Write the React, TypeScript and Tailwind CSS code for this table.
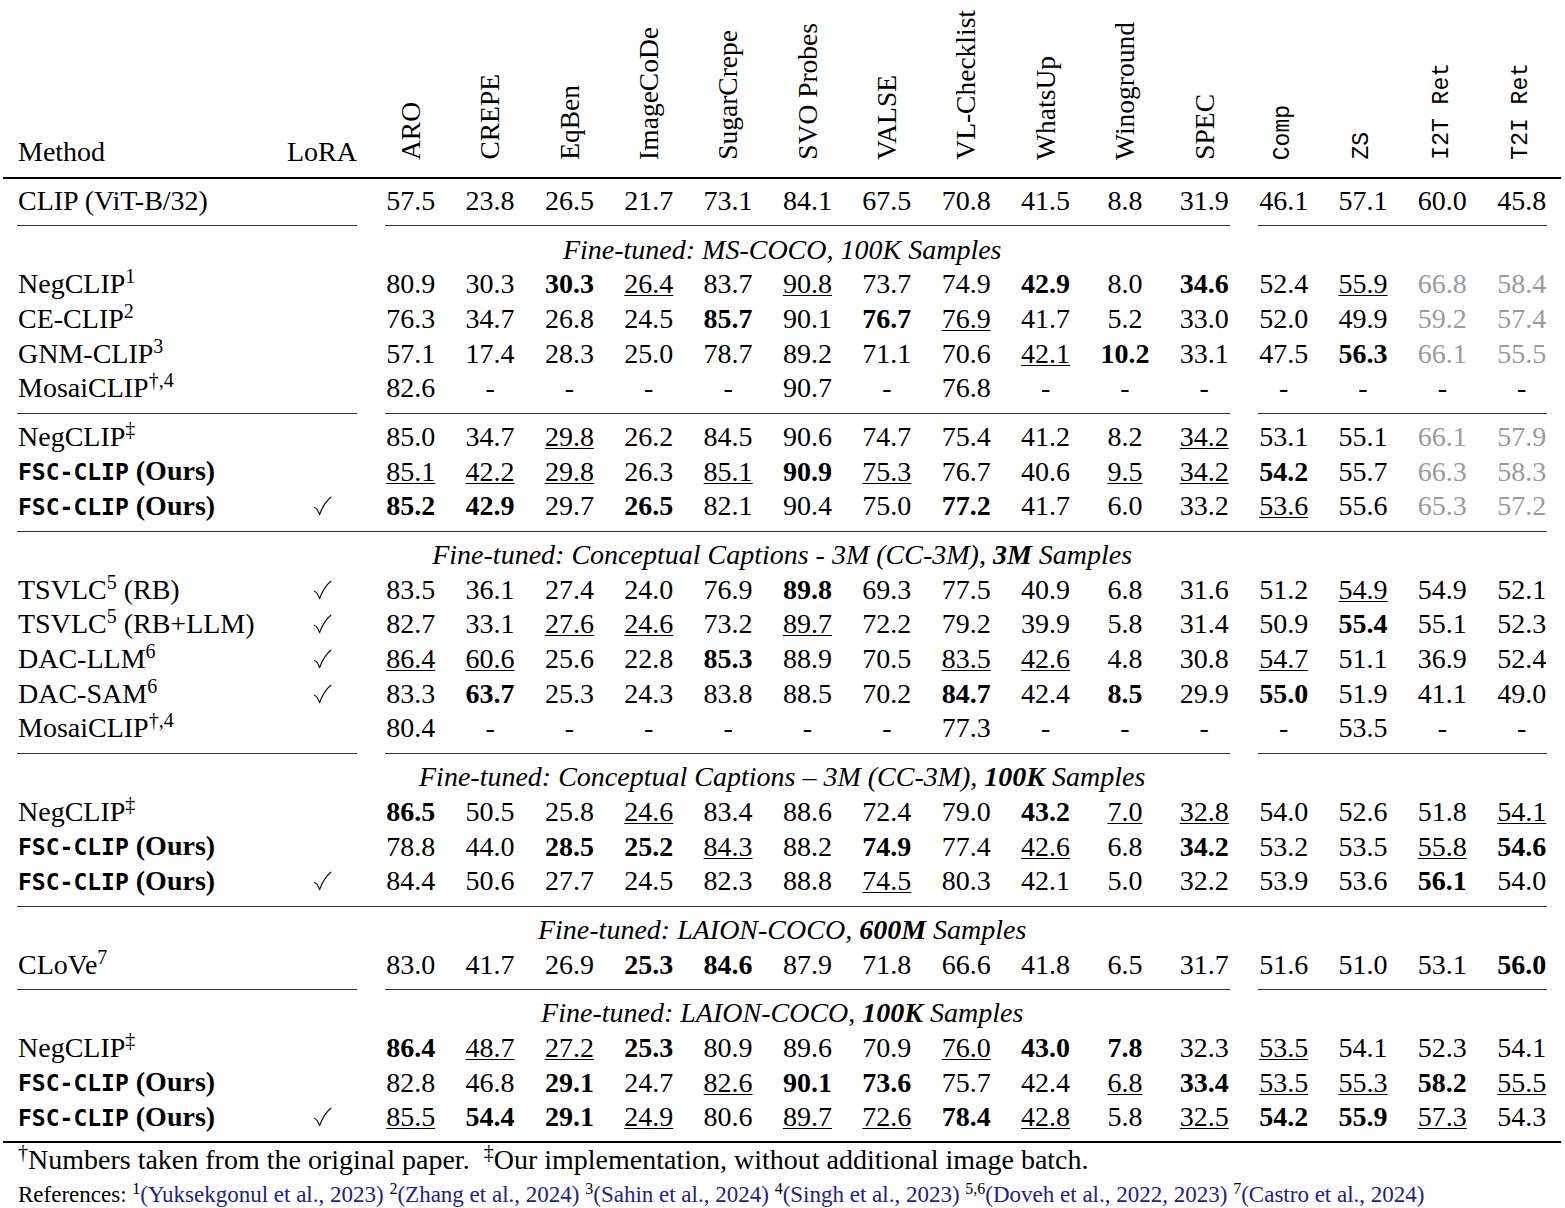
import React from "react";

const GRID = "grid grid-cols-[270px_98px_repeat(15,79.36px)]";

function Num({ v }: { v: string }) {
  let cls = "";
  let t = v;
  if (v.startsWith("b:")) {
    cls = "font-bold";
    t = v.slice(2);
  } else if (v.startsWith("u:")) {
    cls = "underline decoration-1 underline-offset-[2px]";
    t = v.slice(2);
  } else if (v.startsWith("g:")) {
    cls = "text-[#9a9a9a]";
    t = v.slice(2);
  }
  return (
    <div className="text-center leading-[30px] whitespace-nowrap">
      <span className={cls}>{t}</span>
    </div>
  );
}

function Check() {
  return (
    <svg width="19" height="20" viewBox="0 0 19 20" fill="none">
      <path
        d="M1.5 11.5 C3.2 11.8 4.8 14 6.6 18.6 C9.2 11.2 13 5.2 17.8 1.2"
        stroke="#111"
        strokeWidth="1.25"
        strokeLinecap="round"
        strokeLinejoin="round"
      />
    </svg>
  );
}

function Row({ name, lora, vals }: { name: React.ReactNode; lora?: boolean; vals: string[] }) {
  return (
    <div className={`${GRID} h-[34.7px] items-center`}>
      <div className="pl-[15px] whitespace-nowrap leading-[30px]">{name}</div>
      <div className="flex justify-center items-center">{lora ? <Check /> : null}</div>
      {vals.map((v, i) => (
        <Num key={i} v={v} />
      ))}
    </div>
  );
}

function Cmid() {
  return (
    <div className={`${GRID} mt-[7px] mb-[6px]`}>
      <div className="col-span-2 mx-[14px] h-px bg-[#333]" />
      <div className="col-span-11 mx-[14px] h-px bg-[#333]" />
      <div className="col-span-4 mx-[14px] h-px bg-[#333]" />
    </div>
  );
}

function Full() {
  return (
    <div className={`${GRID} mt-[7px] mb-[6px]`}>
      <div className="col-span-full mx-[14px] h-px bg-[#333]" />
    </div>
  );
}

function Title({ children }: { children: React.ReactNode }) {
  return (
    <div className="h-[34.7px] flex items-center justify-center italic leading-[30px] whitespace-nowrap">
      <span>{children}</span>
    </div>
  );
}

const Sup = ({ children }: { children: React.ReactNode }) => (
  <sup className="text-[20px]">{children}</sup>
);

const FSC = (
  <>
    <span className="font-['DejaVu_Sans_Mono',monospace] font-bold text-[23px]">FSC-CLIP</span>
    <span className="font-bold"> (Ours)</span>
  </>
);

const NegD = (
  <>
    NegCLIP<Sup>‡</Sup>
  </>
);

const Mosai = (
  <>
    MosaiCLIP<Sup>†,4</Sup>
  </>
);

const serifHeads = [
  "ARO",
  "CREPE",
  "EqBen",
  "ImageCoDe",
  "SugarCrepe",
  "SVO Probes",
  "VALSE",
  "VL-Checklist",
  "WhatsUp",
  "Winoground",
  "SPEC",
];
const monoHeads = ["Comp", "ZS", "I2T Ret", "T2I Ret"];

const s = (x: string) => x.split(" ");

export default function App() {
  return (
    <div className="bg-white w-[1565px] h-[1208px] overflow-hidden pl-[3px] text-black font-['Liberation_Serif',serif] text-[28px]">
      <div className="w-[1558.4px]">
        {/* Header */}
        <div className={`${GRID} h-[177px]`}>
          <div className="pl-[15px] self-end pb-[10px] leading-[30px]">Method</div>
          <div className="self-end pb-[10px] leading-[30px] text-center">LoRA</div>
          {serifHeads.map((h) => (
            <div key={h} className="flex justify-center items-end pb-[17px]">
              <span className="[writing-mode:vertical-rl] rotate-180 leading-none whitespace-nowrap text-[27.5px]">
                {h}
              </span>
            </div>
          ))}
          {monoHeads.map((h) => (
            <div key={h} className="flex justify-center items-end pb-[17px]">
              <span className="[writing-mode:vertical-rl] rotate-180 leading-none whitespace-pre font-['Liberation_Mono',monospace] text-[23px]">
                {h}
              </span>
            </div>
          ))}
        </div>
        <div className="h-[1.5px] bg-black" />
        <div className="h-[5px]" />

        <Row name="CLIP (ViT-B/32)" vals={s("57.5 23.8 26.5 21.7 73.1 84.1 67.5 70.8 41.5 8.8 31.9 46.1 57.1 60.0 45.8")} />
        <Cmid />
        <Title>Fine-tuned: MS-COCO, 100K Samples</Title>
        <Row
          name={<>NegCLIP<Sup>1</Sup></>}
          vals={s("80.9 30.3 b:30.3 u:26.4 83.7 u:90.8 73.7 74.9 b:42.9 8.0 b:34.6 52.4 u:55.9 g:66.8 g:58.4")}
        />
        <Row
          name={<>CE-CLIP<Sup>2</Sup></>}
          vals={s("76.3 34.7 26.8 24.5 b:85.7 90.1 b:76.7 u:76.9 41.7 5.2 33.0 52.0 49.9 g:59.2 g:57.4")}
        />
        <Row
          name={<>GNM-CLIP<Sup>3</Sup></>}
          vals={s("57.1 17.4 28.3 25.0 78.7 89.2 71.1 70.6 u:42.1 b:10.2 33.1 47.5 b:56.3 g:66.1 g:55.5")}
        />
        <Row name={Mosai} vals={s("82.6 - - - - 90.7 - 76.8 - - - - - - -")} />
        <Cmid />
        <Row name={NegD} vals={s("85.0 34.7 u:29.8 26.2 84.5 90.6 74.7 75.4 41.2 8.2 u:34.2 53.1 55.1 g:66.1 g:57.9")} />
        <Row
          name={FSC}
          vals={s("u:85.1 u:42.2 u:29.8 26.3 u:85.1 b:90.9 u:75.3 76.7 40.6 u:9.5 u:34.2 b:54.2 55.7 g:66.3 g:58.3")}
        />
        <Row
          name={FSC}
          lora
          vals={s("b:85.2 b:42.9 29.7 b:26.5 82.1 90.4 75.0 b:77.2 41.7 6.0 33.2 u:53.6 55.6 g:65.3 g:57.2")}
        />
        <Full />
        <Title>
          Fine-tuned: Conceptual Captions - 3M (CC-3M), <span className="font-bold">3M</span> Samples
        </Title>
        <Row
          name={<>TSVLC<Sup>5</Sup> (RB)</>}
          lora
          vals={s("83.5 36.1 27.4 24.0 76.9 b:89.8 69.3 77.5 40.9 6.8 31.6 51.2 u:54.9 54.9 52.1")}
        />
        <Row
          name={<>TSVLC<Sup>5</Sup> (RB+LLM)</>}
          lora
          vals={s("82.7 33.1 u:27.6 u:24.6 73.2 u:89.7 72.2 79.2 39.9 5.8 31.4 50.9 b:55.4 55.1 52.3")}
        />
        <Row
          name={<>DAC-LLM<Sup>6</Sup></>}
          lora
          vals={s("u:86.4 u:60.6 25.6 22.8 b:85.3 88.9 70.5 u:83.5 u:42.6 4.8 30.8 u:54.7 51.1 36.9 52.4")}
        />
        <Row
          name={<>DAC-SAM<Sup>6</Sup></>}
          lora
          vals={s("83.3 b:63.7 25.3 24.3 83.8 88.5 70.2 b:84.7 42.4 b:8.5 29.9 b:55.0 51.9 41.1 49.0")}
        />
        <Row name={Mosai} vals={s("80.4 - - - - - - 77.3 - - - - 53.5 - -")} />
        <Cmid />
        <Title>
          Fine-tuned: Conceptual Captions – 3M (CC-3M), <span className="font-bold">100K</span> Samples
        </Title>
        <Row
          name={NegD}
          vals={s("b:86.5 50.5 25.8 u:24.6 83.4 88.6 72.4 79.0 b:43.2 u:7.0 u:32.8 54.0 52.6 51.8 u:54.1")}
        />
        <Row
          name={FSC}
          vals={s("78.8 44.0 b:28.5 b:25.2 u:84.3 88.2 b:74.9 77.4 u:42.6 6.8 b:34.2 53.2 53.5 u:55.8 b:54.6")}
        />
        <Row
          name={FSC}
          lora
          vals={s("84.4 50.6 27.7 24.5 82.3 88.8 u:74.5 80.3 42.1 5.0 32.2 53.9 53.6 b:56.1 54.0")}
        />
        <Full />
        <Title>
          Fine-tuned: LAION-COCO, <span className="font-bold">600M</span> Samples
        </Title>
        <Row
          name={<>CLoVe<Sup>7</Sup></>}
          vals={s("83.0 41.7 26.9 b:25.3 b:84.6 87.9 71.8 66.6 41.8 6.5 31.7 51.6 51.0 53.1 b:56.0")}
        />
        <Cmid />
        <Title>
          Fine-tuned: LAION-COCO, <span className="font-bold">100K</span> Samples
        </Title>
        <Row
          name={NegD}
          vals={s("b:86.4 u:48.7 u:27.2 b:25.3 80.9 89.6 70.9 u:76.0 b:43.0 b:7.8 32.3 u:53.5 54.1 52.3 54.1")}
        />
        <Row
          name={FSC}
          vals={s("82.8 46.8 b:29.1 24.7 u:82.6 b:90.1 b:73.6 75.7 42.4 u:6.8 b:33.4 u:53.5 u:55.3 b:58.2 u:55.5")}
        />
        <Row
          name={FSC}
          lora
          vals={s("u:85.5 b:54.4 b:29.1 u:24.9 80.6 u:89.7 u:72.6 b:78.4 u:42.8 5.8 u:32.5 b:54.2 b:55.9 u:57.3 54.3")}
        />
        <div className="h-[6px]" />
        <div className="h-[2px] bg-black" />
        <div className="h-[34.7px] flex items-center pl-[15px] whitespace-nowrap leading-[30px]">
          <span>
            <sup className="text-[20px]">†</sup>Numbers taken from the original paper.&nbsp;&nbsp;
            <sup className="text-[20px]">‡</sup>Our implementation, without additional image batch.
          </span>
        </div>
        <div className="h-[34.7px] flex items-center pl-[15px] whitespace-nowrap text-[23px] leading-[28px]">
          <span>
            References: <sup className="text-[16px]">1</sup>
            <span className="text-[#20208f]">(Yuksekgonul et al., 2023)</span> <sup className="text-[16px]">2</sup>
            <span className="text-[#20208f]">(Zhang et al., 2024)</span> <sup className="text-[16px]">3</sup>
            <span className="text-[#20208f]">(Sahin et al., 2024)</span> <sup className="text-[16px]">4</sup>
            <span className="text-[#20208f]">(Singh et al., 2023)</span> <sup className="text-[16px]">5,6</sup>
            <span className="text-[#20208f]">(Doveh et al., 2022, 2023)</span> <sup className="text-[16px]">7</sup>
            <span className="text-[#20208f]">(Castro et al., 2024)</span>
          </span>
        </div>
      </div>
    </div>
  );
}
